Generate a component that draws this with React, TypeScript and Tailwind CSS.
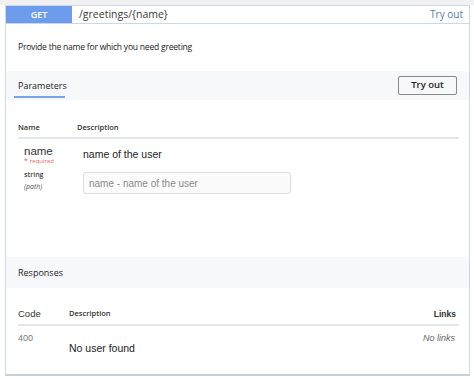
import React from "react";

const os = { fontFamily: '"Open Sans", "Noto Sans", sans-serif' };
const ar = { fontFamily: '"Liberation Sans", Arial, sans-serif' };

export default function App() {
  return (
    <div className="w-[474px] h-[379px] bg-white overflow-hidden relative" style={os}>
      <div className="h-[5px] bg-[#f1f1f1]" />
      <div className="ml-[5px] w-[465px] h-[371px] border border-[#cdd8e8] border-b-2 border-b-[#c8d0dc] flex flex-col bg-white">
        {/* header */}
        <div className="h-[18px] flex items-stretch border-b border-[#c9d8ee] bg-white">
          <div className="w-[66px] bg-[#6e9cec] text-white text-[9px] font-semibold flex items-center justify-center">GET</div>
          <div className="pl-[7px] flex items-center text-[10.5px] text-[#3a3a3a]">/greetings/{"{name}"}</div>
          <div className="ml-auto pr-[6px] flex items-center text-[10px] text-[#5b79a8]">Try out</div>
        </div>
        {/* description */}
        <div className="h-[47px] flex items-center pl-[12px] text-[8.6px] text-[#222]" style={{ letterSpacing: "-0.25px" }}>
          Provide the name for which you need greeting
        </div>
        {/* parameters bar */}
        <div className="h-[29px] bg-[#f7f8fa] flex items-stretch pl-[8px] pr-[12px]">
          <div className="relative flex items-center px-[4px] text-[9px] text-[#222] w-[51px]">
            Parameters
            <div className="absolute left-0 right-0 bottom-[2px] h-[2px] bg-[#7aa3e5]" />
          </div>
          <div className="ml-auto flex items-center">
            <div className="w-[59px] h-[19px] border border-[#8a8a8a] rounded-[2px] flex items-center justify-center text-[9.5px] font-semibold text-[#222]">Try out</div>
          </div>
        </div>
        {/* params table */}
        <div className="pl-[12px] pr-[10px] pt-[18px] h-[157px]">
          <div className="flex h-[21px] items-center text-[7.5px] font-semibold text-[#333] border-b-2 border-[#e3e6ea]">
            <div className="w-[59px]">Name</div>
            <div>Description</div>
          </div>
          <div className="flex pt-[6px]">
            <div className="w-[59px] pl-[6px]">
              <div className="text-[11.5px] leading-[12px] text-[#333]" style={ar}>name</div>
              <div className="flex items-center gap-[2px] text-[6px] leading-[8px] text-[#e06666]">
                <span className="text-[7px]">*</span>required
              </div>
              <div className="mt-[5px] text-[7px] font-semibold text-[#444] leading-[10px]">string</div>
              <div className="mt-[2px] text-[7px] italic text-[#555] leading-[10px]">(path)</div>
            </div>
            <div className="pl-[6px]">
              <div className="text-[10.5px] text-[#222] pt-[3px] leading-[12px]" style={ar}>name of the user</div>
              <div className="mt-[12px] w-[208px] h-[22px] border border-[#dcdcdc] rounded-[3px] bg-[#fbfbfb] flex items-center pl-[5px] text-[10px] text-[#8a8a8a]" style={ar}>
                name - name of the user
              </div>
            </div>
          </div>
        </div>
        {/* responses bar */}
        <div className="h-[31px] bg-[#f7f8fb] flex items-center pl-[12px] text-[9px] text-[#222]">Responses</div>
        {/* responses table */}
        <div className="pl-[12px] pr-[10px] pt-[16px]">
          <div className="flex h-[22px] items-center border-b-2 border-[#e3e6ea]">
            <div className="w-[51px] text-[9.5px] text-[#333]" style={ar}>Code</div>
            <div className="text-[7.5px] font-semibold text-[#333]">Description</div>
            <div className="ml-auto pr-[3px] text-[8.5px] font-bold text-[#333]" style={ar}>Links</div>
          </div>
          <div className="flex pt-[6px]">
            <div className="w-[51px] text-[9px] text-[#777]" style={ar}>400</div>
            <div className="pt-[9px] text-[10.5px] text-[#222]" style={ar}>No user found</div>
            <div className="ml-auto pr-[4px] text-[9px] italic text-[#666]" style={ar}>No links</div>
          </div>
        </div>
      </div>
    </div>
  );
}
